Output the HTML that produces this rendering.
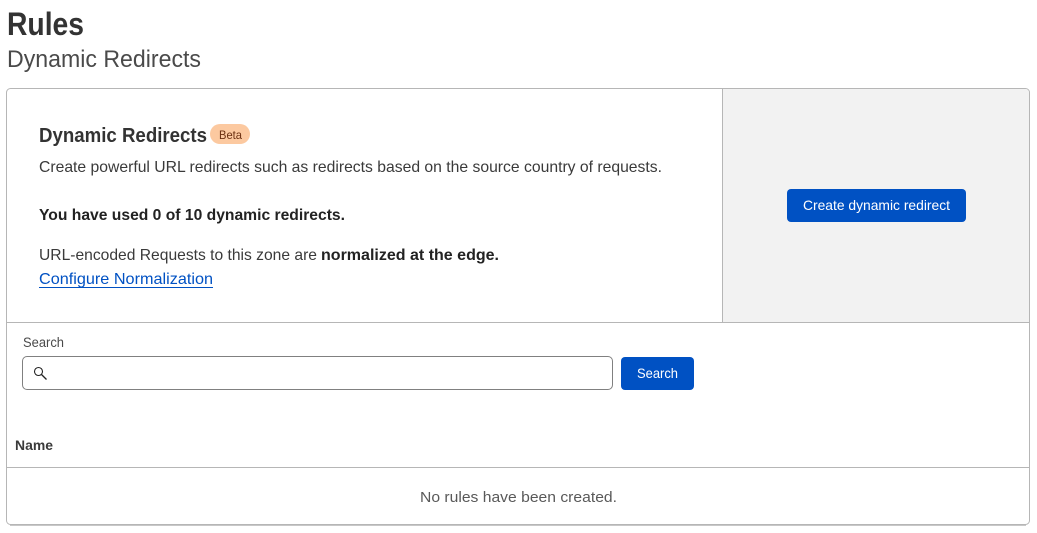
<!DOCTYPE html>
<html><head><meta charset="utf-8"><style>
html,body{margin:0;padding:0;background:#fff;width:1037px;height:533px;overflow:hidden}
svg{display:block}
text{font-family:"Liberation Sans",sans-serif;fill:#313131}
</style></head><body>
<svg width="1037" height="533" viewBox="0 0 1037 533" xmlns="http://www.w3.org/2000/svg">
<rect x="6.5" y="88.5" width="1023" height="436" rx="4" fill="#fff" stroke="#b6b6b6"/>
<path d="M722.5 89H1025.5a3.5 3.5 0 0 1 3.5 3.5V322H722.5z" fill="#f2f2f2"/>
<path d="M10 525h1016" stroke="#b6b6b6" stroke-width="1.5"/>
<path d="M722.5 89V322.5M7 322.5H1029M7 467.5H1029" stroke="#b6b6b6" fill="none"/>
<text x="7" y="35" font-size="32" font-weight="700" textLength="77" lengthAdjust="spacingAndGlyphs" style="fill:#333">Rules</text>
<text x="7" y="67" font-size="24" textLength="194" lengthAdjust="spacingAndGlyphs" style="fill:#4a4a4a">Dynamic Redirects</text>
<text x="39" y="142" font-size="20" font-weight="700" textLength="168" lengthAdjust="spacingAndGlyphs" style="fill:#333">Dynamic Redirects</text>
<rect x="210" y="124" width="40" height="20" rx="10" fill="#fcc9a0"/>
<text x="219" y="139" font-size="12" textLength="23" lengthAdjust="spacingAndGlyphs" style="fill:#6b2f10">Beta</text>
<text x="39" y="172" font-size="16" textLength="623" lengthAdjust="spacingAndGlyphs" style="fill:#3a3a3a">Create powerful URL redirects such as redirects based on the source country of requests.</text>
<text x="39" y="220" font-size="16" font-weight="700" textLength="306" lengthAdjust="spacingAndGlyphs" style="fill:#222">You have used 0 of 10 dynamic redirects.</text>
<text x="39" y="260" font-size="16" textLength="278" lengthAdjust="spacingAndGlyphs" style="fill:#3a3a3a">URL-encoded Requests to this zone are</text>
<text x="321" y="260" font-size="16" font-weight="700" textLength="178" lengthAdjust="spacingAndGlyphs" style="fill:#222">normalized at the edge.</text>
<text x="39" y="284" font-size="16" textLength="174" lengthAdjust="spacingAndGlyphs" style="fill:#0051c3">Configure Normalization</text>
<path d="M39 287.5H213" stroke="#0051c3"/>
<rect x="787" y="189" width="179" height="33" rx="4" fill="#0051c3"/>
<text x="803" y="210" font-size="14" textLength="147" lengthAdjust="spacingAndGlyphs" style="fill:#fff">Create dynamic redirect</text>
<text x="23" y="347" font-size="13.5" textLength="41" lengthAdjust="spacingAndGlyphs" style="fill:#4a4a4a">Search</text>
<rect x="22.5" y="356.5" width="590" height="33" rx="4.5" fill="#fff" stroke="#808080"/>
<circle cx="38.5" cy="371.5" r="4" fill="none" stroke="#222" stroke-width="1.1"/>
<path d="M41.5 374.5L46.5 379.5" stroke="#222" stroke-width="1.3"/>
<rect x="621" y="357" width="73" height="33" rx="4" fill="#0051c3"/>
<text x="637" y="378" font-size="14" textLength="41" lengthAdjust="spacingAndGlyphs" style="fill:#fff">Search</text>
<text x="15" y="450" font-size="14" font-weight="700" textLength="38" lengthAdjust="spacingAndGlyphs" style="fill:#3a3a3a">Name</text>
<text x="420" y="502" font-size="15" textLength="197" lengthAdjust="spacingAndGlyphs" style="fill:#595959">No rules have been created.</text>
</svg>
</body></html>
